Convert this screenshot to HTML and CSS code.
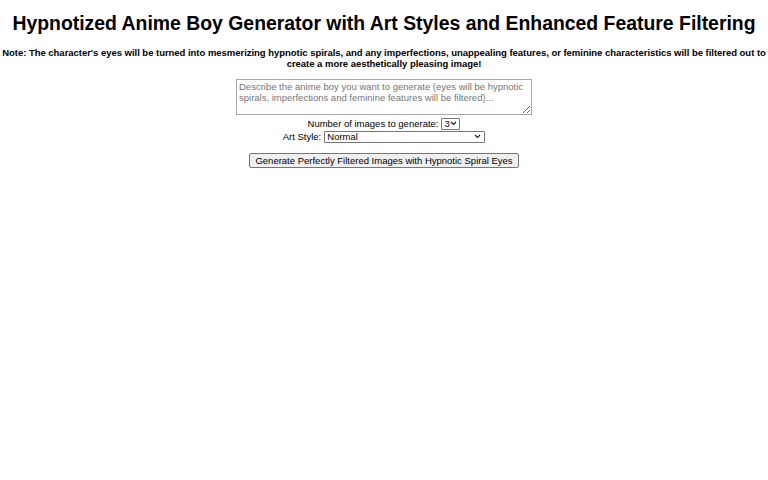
FILE: index.html
```html
<!DOCTYPE html>
<html>
<head>
<meta charset="utf-8">
<link rel="stylesheet" href="styles.css">
</head>
<body>
<h1 class="title">Hypnotized Anime Boy Generator with Art Styles and Enhanced Feature Filtering</h1>
<p class="note">Note: The character's eyes will be turned into mesmerizing hypnotic spirals, and any imperfections, unappealing features, or feminine characteristics will be filtered out to create a more aesthetically pleasing image!</p>
<div class="form">
  <textarea class="prompt" placeholder="Describe the anime boy you want to generate (eyes will be hypnotic spirals, imperfections and feminine features will be filtered)..."></textarea>
  <div class="row row-first">
    <label>Number of images to generate:</label>
    <select class="count"><option>1</option><option>2</option><option selected>3</option><option>4</option></select>
  </div>
  <div class="row">
    <label>Art Style:</label>
    <select class="style"><option>Normal</option><option>Anime</option></select>
  </div>
  <button class="go">Generate Perfectly Filtered Images with Hypnotic Spiral Eyes</button>
</div>
</body>
</html>
```
FILE: styles.css
```css
html, body {
  margin: 0;
  padding: 0;
  background: #fff;
}
body {
  font-family: "Liberation Sans", Arial, sans-serif;
  font-size: 9.5px;
  color: #000;
  text-align: center;
}
.title {
  font-size: 19.4px;
  font-weight: bold;
  margin: 11px 0 0;
  line-height: 24px;
}
.note {
  font-weight: bold;
  font-size: 9.5px;
  letter-spacing: -0.03px;
  line-height: 11px;
  margin: 12px 0 0;
}
.form {
  display: flex;
  flex-direction: column;
  align-items: center;
  margin-top: 10px;
}
.prompt {
  width: 296px;
  height: 36px;
  box-sizing: border-box;
  font-family: "Liberation Sans", Arial, sans-serif;
  font-size: 9.5px;
  line-height: 11px;
  padding: 1px 2px;
  margin: 0;
  border: 1px solid #a9a9a9;
  border-radius: 0;
  resize: both;
}
.prompt::placeholder {
  color: #767676;
}
.row {
  height: 13px;
  display: flex;
  align-items: center;
  gap: 3px;
}
.row-first {
  margin-top: 2px;
}
select {
  -webkit-appearance: none;
  appearance: none;
  font-family: "Liberation Sans", Arial, sans-serif;
  font-size: 9.5px;
  line-height: 10px;
  margin: 0;
  height: 12px;
  padding: 0 10px 0 2px;
  border: 1px solid #767676;
  border-radius: 1px;
  color: #000;
  background: #fff url("data:image/svg+xml,%3Csvg xmlns='http://www.w3.org/2000/svg' width='7' height='5' viewBox='0 0 7 5'%3E%3Cpath d='M1 1l2.5 2.5L6 1' fill='none' stroke='%23222' stroke-width='1.2'/%3E%3C/svg%3E") no-repeat right 3px center;
  text-align: left;
}
.count {
  width: 19px;
  padding-right: 9px;
  background-position: right 2px center;
}
.style {
  width: 161px;
}
.go {
  margin-top: 10px;
  height: 15px;
  width: 270px;
  padding: 0 4px;
  font-family: "Liberation Sans", Arial, sans-serif;
  font-size: 9.5px;
  line-height: 13px;
  background: #efefef;
  border: 1px solid #767676;
  border-radius: 2px;
  color: #000;
}
```
